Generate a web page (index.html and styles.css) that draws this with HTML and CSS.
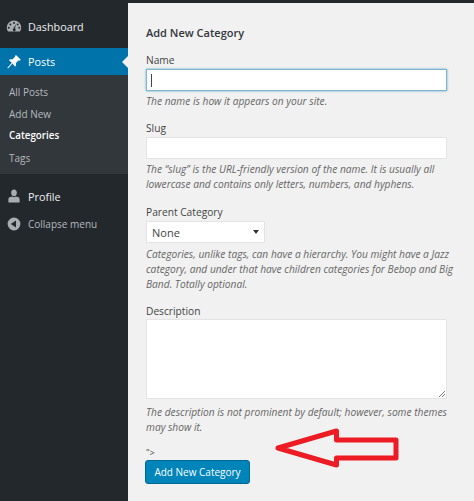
FILE: index.html
```html
<!DOCTYPE html>
<html lang="en">
<head>
<meta charset="utf-8">
<title>Add New Category</title>
<link rel="stylesheet" href="styles.css">
</head>
<body>
<div class="page">
  <div class="sidebar">
    <div class="menu-item dashboard">
      <svg class="icon" viewBox="0 0 20 20"><path fill="#a8adb1" d="M10 3a9 9 0 0 0-9 9c0 2 .6 3.700 1.700 5h14.600A9 9 0 0 0 19 12a9 9 0 0 0-9-9zm0 2a1.200 1.200 0 1 1 0 2.400A1.200 1.200 0 0 1 10 5zM5.500 7a1.200 1.200 0 1 1 0 2.400 1.200 1.200 0 0 1 0-2.400zm9 0a1.200 1.200 0 1 1 0 2.400 1.200 1.200 0 0 1 0-2.400zM3.500 11a1.200 1.200 0 1 1 0 2.400 1.200 1.200 0 0 1 0-2.400zm13 0a1.200 1.200 0 1 1 0 2.400 1.200 1.200 0 0 1 0-2.400zM12.500 7.800 11.200 13a1.800 1.800 0 1 1-2 .2z"/></svg>
      <span>Dashboard</span>
    </div>
    <div class="menu-item active">
      <svg class="icon" viewBox="0 0 20 20"><path fill="#fff" d="M12.800 1.500 18.500 7.200l-1.300 1.200-1.200-.5-3.600 3.500c.5 1.700.2 3.200-.8 4.400L8 11.900 2.500 18l-.8-.7L7.300 11 3.500 7.600c1.200-1 2.800-1.300 4.500-.8l3.500-3.600-.4-1.100z"/></svg>
      <span>Posts</span>
    </div>
    <ul class="submenu">
      <li>All Posts</li>
      <li>Add New</li>
      <li class="current">Categories</li>
      <li>Tags</li>
    </ul>
    <div class="menu-item profile">
      <svg class="icon" viewBox="0 0 20 20"><path fill="#a8adb1" d="M10 2c2.200 0 3.600 1.700 3.600 3.900S12.200 10.300 10 10.300 6.400 8.100 6.400 5.900 7.800 2 10 2zM4.500 11.500c1.200-.6 2.500-.7 3.300-.8.600.6 1.300.9 2.200.9s1.600-.3 2.200-.9c.8.1 2.100.2 3.300.8 1 .5 1.500 1.500 1.500 2.500V18H3v-4c0-1 .5-2 1.500-2.500z"/></svg>
      <span>Profile</span>
    </div>
    <div class="menu-item collapse">
      <svg class="icon" viewBox="0 0 20 20"><path fill="#a8adb1" d="M10 2a8 8 0 1 1 0 16 8 8 0 0 1 0-16zm2.500 3.500L6 10l6.500 4.500z"/></svg>
      <span>Collapse menu</span>
    </div>
  </div>

  <div class="content">
    <h2>Add New Category</h2>
    <div class="field">
      <label>Name</label>
      <div class="input focused"><span class="caret"></span></div>
      <p>The name is how it appears on your site.</p>
    </div>
    <div class="field slug">
      <label>Slug</label>
      <div class="input"></div>
      <p>The “slug” is the URL-friendly version of the name. It is usually all lowercase and contains only letters, numbers, and hyphens.</p>
    </div>
    <div class="field">
      <label>Parent Category</label>
      <div class="select"><span>None</span><i class="select-arrow"></i></div>
      <p>Categories, unlike tags, can have a hierarchy. You might have a Jazz category, and under that have children categories for Bebop and Big Band. Totally optional.</p>
    </div>
    <div class="field description">
      <label>Description</label>
      <div class="textarea">
        <svg class="grip" viewBox="0 0 8 8"><path d="M1 7 7 1M4 7l3-3" stroke="#777" fill="none"/></svg>
      </div>
      <p>The description is not prominent by default; however, some themes may show it.</p>
    </div>
    <div class="stray">"&gt;</div>
    <div class="button">Add New Category</div>
  </div>

  <svg class="arrow" viewBox="0 0 474 501"><path d="M278 448 336.500 431V440H396V458H336.500V465Z" fill="none" stroke="#ed1c24" stroke-width="5" stroke-linejoin="round"/></svg>
</div>
</body>
</html>
```
FILE: styles.css
```css
html, body {
    margin: 0;
    padding: 0;
}
body {
    font-family: "Open Sans", sans-serif;
    font-size: 10px;
    color: #444;
    background: #f1f1f1;
}
.page {
    position: relative;
    display: flex;
    width: 474px;
    height: 501px;
    overflow: hidden;
    background: #23282d;
}

/* admin menu */
.sidebar {
    width: 128px;
    flex: none;
    background: #23282d;
    padding-top: 12px;
    box-sizing: border-box;
}
.menu-item {
    display: flex;
    align-items: center;
    height: 28px;
    padding-left: 6px;
    color: #eee;
    font-size: 10.800px;
    position: relative;
}
.menu-item .icon {
    width: 16px;
    height: 16px;
    margin-right: 6px;
}
.menu-item.dashboard {
    margin-bottom: 8px;
}
.menu-item.active {
    background: #0073aa;
    color: #fff;
    height: 27px;
}
.menu-item.active:after {
    content: "";
    position: absolute;
    right: 0;
    top: 8px;
    border: 6px solid transparent;
    border-left: 0;
    border-right-color: #f1f1f1;
}
.submenu {
    margin: 0;
    padding: 6px 0 5px 9px;
    list-style: none;
    background: #32373c;
    color: #b4b9be;
    font-size: 10px;
}
.submenu li {
    height: 22px;
    line-height: 22px;
}
.submenu li.current {
    color: #fff;
    font-weight: 600;
    font-size: 9.800px;
}
.menu-item.profile {
    margin-top: 8px;
}
.menu-item.collapse {
    color: #b4b9be;
    font-size: 10px;
}

/* form */
.content {
    flex: 1;
    margin-top: 3px;
    padding: 21px 0 0 18px;
    background: #f1f1f1;
}
.content h2 {
    margin: 0 0 12px;
    font-size: 11px;
    line-height: 17px;
    font-weight: 600;
    color: #32373c;
}
.field {
    margin-bottom: 12px;
    width: 308px;
}
.field.slug {
    margin-bottom: 13px;
}
.field label {
    display: block;
    line-height: 15px;
    margin-bottom: 1px;
    font-size: 10.200px;
}
.field p {
    margin: 3px 0 0;
    font-size: 10.200px;
    line-height: 15px;
    font-style: italic;
    color: #666;
}
.input {
    box-sizing: border-box;
    width: 301px;
    height: 22px;
    background: #fff;
    border: 1px solid #e4e4e4;
    padding: 4px 4px;
}
.input.focused {
    border-color: #7eb4d4;
    box-shadow: 0 0 2px rgba(30, 140, 190, .7);
}
.caret {
    display: block;
    width: 1px;
    height: 13px;
    background: #444;
}
.select {
    box-sizing: border-box;
    display: flex;
    justify-content: space-between;
    align-items: center;
    width: 119px;
    height: 22px;
    margin-bottom: 4px;
    background: #fff;
    border: 1px solid #e4e4e4;
    padding: 0 5px;
    font-size: 11px;
}
.select-arrow {
    border: 3px solid transparent;
    border-top: 4px solid #333;
    border-bottom: 0;
}
.textarea {
    box-sizing: border-box;
    position: relative;
    width: 301px;
    height: 80px;
    background: #fff;
    border: 1px solid #e4e4e4;
}
.description label {
    margin-bottom: 0;
}
.description p {
    margin-top: 6px;
}
.stray {
    font-size: 9px;
    line-height: 11px;
    margin-bottom: 2px;
}
.grip {
    position: absolute;
    right: 0;
    bottom: 0;
    width: 8px;
    height: 8px;
}
.button {
    width: 105px;
    height: 24px;
    margin-left: -1px;
    line-height: 22px;
    box-sizing: border-box;
    text-align: center;
    background: #0085ba;
    border: 1px solid #006799;
    border-radius: 3px;
    color: #fff;
    font-size: 10px;
}

/* annotation drawn over the screenshot */
.arrow {
    position: absolute;
    left: 0;
    top: 0;
    width: 474px;
    height: 501px;
    pointer-events: none;
}
```
